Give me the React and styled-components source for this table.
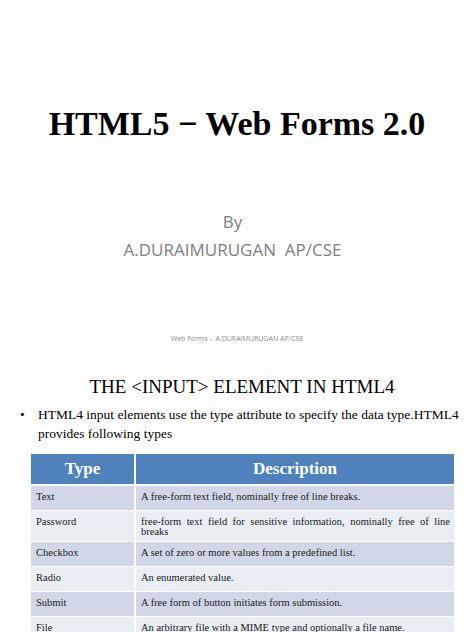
import styled, { createGlobalStyle } from "styled-components";

const GlobalStyle = createGlobalStyle`
  html, body {
    margin: 0;
    padding: 0;
    background: #ffffff;
  }
  * {
    box-sizing: border-box;
  }
`;

const rows = [
  { type: "Text", desc: "A free-form text field, nominally free of line breaks." },
  {
    type: "Password",
    desc: "free-form text field for sensitive information, nominally free of line breaks",
  },
  { type: "Checkbox", desc: "A set of zero or more values from a predefined list." },
  { type: "Radio", desc: "An enumerated value." },
  { type: "Submit", desc: "A free form of button initiates form submission." },
  { type: "File", desc: "An arbitrary file with a MIME type and optionally a file name." },
];

const App = () => {
  return (
    <Page>
      <GlobalStyle />
      <TitleSlide>
        <MainTitle>HTML5 − Web Forms 2.0</MainTitle>
        <Byline>
          <span>By</span>
          <span>A.DURAIMURUGAN&nbsp;&nbsp;AP/CSE</span>
        </Byline>
        <Footer>Web Forms -&nbsp; A.DURAIMURUGAN AP/CSE</Footer>
      </TitleSlide>

      <ContentSlide>
        <SlideHeading>THE &lt;INPUT&gt; ELEMENT IN HTML4</SlideHeading>
        <BulletList>
          <li>
            HTML4 input elements use the type attribute to specify the data
            type.HTML4 provides following types
          </li>
        </BulletList>

        <Table>
          <thead>
            <tr>
              <HeadCell $first>Type</HeadCell>
              <HeadCell>Description</HeadCell>
            </tr>
          </thead>
          <tbody>
            {rows.map((row, index) => (
              <Row key={row.type} $odd={index % 2 === 0}>
                <Cell $first>{row.type}</Cell>
                <Cell>{row.desc}</Cell>
              </Row>
            ))}
          </tbody>
        </Table>
      </ContentSlide>
    </Page>
  );
};

export default App;

/* ---------------------- STYLED COMPONENTS ---------------------- */

const Page = styled.div`
  width: 474px;
  height: 632px;
  overflow: hidden;
  background: #ffffff;
  display: flex;
  flex-direction: column;
`;

const TitleSlide = styled.section`
  display: flex;
  flex-direction: column;
  align-items: center;
  padding-top: 102px;
`;

const MainTitle = styled.h1`
  margin: 0;
  font-family: "Liberation Serif", "Times New Roman", serif;
  font-weight: bold;
  font-size: 34px;
  line-height: 44px;
  color: #000000;
`;

const Byline = styled.div`
  margin-top: 62px;
  padding-right: 9px;
  display: flex;
  flex-direction: column;
  align-items: center;
  font-family: "Open Sans", "Liberation Sans", sans-serif;
  font-size: 17px;
  line-height: 28px;
  color: #7f7f7f;
`;

const Footer = styled.div`
  margin-top: 70px;
  font-family: "Open Sans", "Liberation Sans", sans-serif;
  font-size: 7px;
  line-height: 10px;
  color: #8c8c8c;
`;

const ContentSlide = styled.section`
  display: flex;
  flex-direction: column;
  padding: 0 10px 0 20px;
`;

const SlideHeading = styled.h2`
  margin: 30px 0 0 0;
  text-align: center;
  font-family: "Liberation Serif", "Times New Roman", serif;
  font-weight: normal;
  font-size: 19px;
  line-height: 26px;
  color: #000000;
`;

const BulletList = styled.ul`
  margin: 5px 0 0 0;
  padding: 0 0 0 18px;
  list-style: none;
  font-family: "Liberation Serif", "Times New Roman", serif;
  font-size: 13.5px;
  line-height: 19px;
  color: #000000;

  li {
    position: relative;
  }

  li::before {
    content: "•";
    position: absolute;
    left: -18px;
    top: 0;
  }
`;

const Table = styled.table`
  margin: 11px 0 0 11px;
  width: 423px;
  border-collapse: collapse;
  table-layout: fixed;
`;

const HeadCell = styled.th`
  width: ${(props) => (props.$first ? "104px" : "auto")};
  height: 31px;
  padding: 0;
  background: #4f81bd;
  color: #ffffff;
  font-family: "Liberation Serif", "Times New Roman", serif;
  font-weight: bold;
  font-size: 17px;
  text-align: center;
  border-right: ${(props) => (props.$first ? "2px solid #ffffff" : "none")};
  border-bottom: 2px solid #ffffff;
`;

const Row = styled.tr`
  background: ${(props) => (props.$odd ? "#d0d8e8" : "#e9edf4")};
`;

const Cell = styled.td`
  height: 25px;
  padding: 6px 4px 3px 5px;
  vertical-align: top;
  font-family: "Liberation Serif", "Times New Roman", serif;
  font-size: 10.5px;
  line-height: 10.5px;
  color: #1a1a1a;
  text-align: ${(props) => (props.$first ? "left" : "justify")};
  border-right: ${(props) => (props.$first ? "2px solid #ffffff" : "none")};
  border-bottom: 1px solid #ffffff;
`;
